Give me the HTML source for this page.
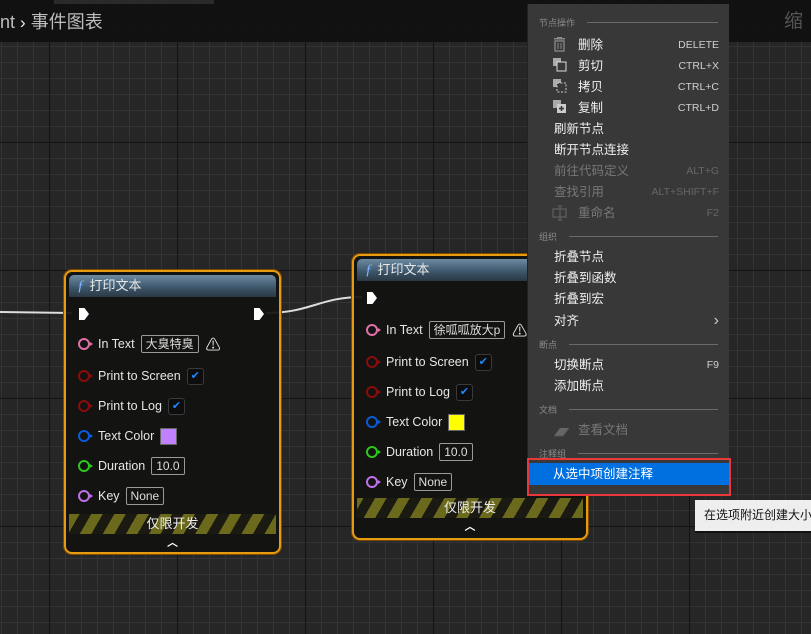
<!DOCTYPE html>
<html><head><meta charset="utf-8"><style>
*{margin:0;padding:0;box-sizing:border-box}
body{width:811px;height:634px;overflow:hidden;position:relative;font-family:"Liberation Sans","Noto Sans CJK SC",sans-serif;
background-color:#262626;
background-image:
linear-gradient(90deg,#131313 1px,transparent 1px),
linear-gradient(0deg,#131313 1px,transparent 1px),
linear-gradient(90deg,#343434 1px,transparent 1px),
linear-gradient(0deg,#343434 1px,transparent 1px);
background-size:128px 128px,128px 128px,16px 16px,16px 16px;
background-position:49px 0,0 15px,1px 0,0 15px;}
.abs{position:absolute}
.top{left:0;top:0;width:811px;height:42px;background:rgba(16,16,16,.93)}
.node{position:absolute;border:2px solid #e89a10;border-radius:8px;background:rgba(18,19,17,.93);box-shadow:0 0 0 1px #7a4a00}
.node .hd{position:absolute;left:3px;right:3px;top:3px;height:22px;border-radius:5px 5px 0 0;background:linear-gradient(180deg,#6c8aa2 0%,#3b5468 60%,#2a3844 100%);color:#e8e8e8;font-size:13px;line-height:22px;padding-left:8px}
.node .hd i{color:#7fb6ff;font-family:"Liberation Serif",serif;font-size:15px;margin-right:5px}
.row{position:absolute;left:12px;height:20px;display:flex;align-items:center;color:#e6e6e6;font-size:12.5px;white-space:nowrap}
.pin{width:12px;height:12px;border-radius:50%;border:2px solid;margin-right:8px;position:relative}
.pin:after{content:"";position:absolute;right:-5px;top:2px;border-left:3px solid;border-left-color:inherit;border-top:2px solid transparent;border-bottom:2px solid transparent}
.box{border:1px solid #9a9a9a;border-radius:2px;padding:0 4px;height:18px;line-height:16px;margin-left:6px;color:#ddd;font-size:12px}
.chk{width:17px;height:17px;border:1px solid #3a3a3a;border-radius:3px;background:#0d0d0d;margin-left:6px;color:#1e88ff;font-size:11px;text-align:center;line-height:15px}
.sw{width:17px;height:17px;margin-left:6px;border:1px solid #666}
.stripe{position:absolute;left:3px;right:3px;height:20px;background:repeating-linear-gradient(-60deg,#6b6a1c 0 10px,#1a1a12 10px 20px);color:#eee;font-size:13px;text-align:center;line-height:20px}
.caret{position:absolute;left:0;right:0;text-align:center;color:#fff;font-size:11px;font-weight:bold}
.exec{position:absolute;width:10px;height:12px;background:#fff;clip-path:polygon(0 0,55% 0,100% 50%,55% 100%,0 100%)}
.menu{left:527px;top:4px;width:202px;height:490px;background:#383838;border-left:1px solid #222}
.mi{position:absolute;left:26px;right:10px;height:20px;line-height:20px;font-size:12.5px;color:#f0f0f0;white-space:nowrap}
.mi b{position:absolute;right:0;top:0;font-weight:normal;font-size:10.5px;color:#cfcfcf}
.mi.d{color:#777}.mi.d b{color:#666}
.mi.ic{padding-left:24px}
.sec{position:absolute;left:11px;right:11px;font-size:9px;color:#8a8a8a;height:12px;display:flex;align-items:center}
.sec:after{content:"";flex:1;height:1px;background:#6a6a6a;margin-left:12px}
</style></head><body>
<div class="abs top"></div>
<div class="abs" style="left:54px;top:0;width:160px;height:4px;background:#2a2a2a"></div>
<div class="abs" style="left:0;top:8px;color:#bdbdbd;font-size:18px;line-height:28px;white-space:nowrap">nt <span style="color:#eee;font-size:17px">&#x203A;</span> 事件图表</div>
<div class="abs" style="left:784px;top:8px;color:#555;font-size:19px;line-height:28px">缩</div>

<svg class="abs" style="left:0;top:0" width="811" height="634">
<path d="M0 312 L72 313" stroke="#ddd" stroke-width="2" fill="none"/>
<path d="M266 313 C310 313,320 297,362 297" stroke="#ddd" stroke-width="2" fill="none"/>
</svg>

<div class="node" style="left:64px;top:270px;width:217px;height:284px">
 <div class="hd"><i>ƒ</i>打印文本</div>
 <div class="exec" style="left:13px;top:36px"></div>
 <div class="exec" style="left:188px;top:36px"></div>
 <div class="row" style="top:62px"><div class="pin" style="border-color:#e070a8"></div>In Text<span class="box">大臭特臭</span><span style="margin-left:7px;font-size:15px">⚠</span></div>
 <div class="row" style="top:94px"><div class="pin" style="border-color:#8a0c0c"></div>Print to Screen<span class="chk">✔</span></div>
 <div class="row" style="top:124px"><div class="pin" style="border-color:#8a0c0c"></div>Print to Log<span class="chk">✔</span></div>
 <div class="row" style="top:154px"><div class="pin" style="border-color:#0c5ad8"></div>Text Color<span class="sw" style="background:#c080ff"></span></div>
 <div class="row" style="top:184px"><div class="pin" style="border-color:#2ec81c"></div>Duration<span class="box">10.0</span></div>
 <div class="row" style="top:214px"><div class="pin" style="border-color:#c070e8"></div>Key<span class="box">None</span></div>
 <div class="stripe" style="top:242px">仅限开发</div>
 <div class="caret" style="top:262px">︿</div>
</div>

<div class="node" style="left:352px;top:254px;width:236px;height:286px">
 <div class="hd"><i>ƒ</i>打印文本</div>
 <div class="exec" style="left:13px;top:36px"></div>
 <div class="row" style="top:64px"><div class="pin" style="border-color:#e070a8"></div>In Text<span class="box">徐呱呱放大p</span><span style="margin-left:7px;font-size:15px">⚠</span></div>
 <div class="row" style="top:96px"><div class="pin" style="border-color:#8a0c0c"></div>Print to Screen<span class="chk">✔</span></div>
 <div class="row" style="top:126px"><div class="pin" style="border-color:#8a0c0c"></div>Print to Log<span class="chk">✔</span></div>
 <div class="row" style="top:156px"><div class="pin" style="border-color:#0c5ad8"></div>Text Color<span class="sw" style="background:#ffff00"></span></div>
 <div class="row" style="top:186px"><div class="pin" style="border-color:#2ec81c"></div>Duration<span class="box">10.0</span></div>
 <div class="row" style="top:216px"><div class="pin" style="border-color:#c070e8"></div>Key<span class="box">None</span></div>
 <div class="stripe" style="top:242px">仅限开发</div>
 <div class="caret" style="top:262px">︿</div>
</div>

<div class="abs menu">
 <div class="sec" style="top:12px">节点操作</div>
 <div class="mi ic" style="top:31px">删除<b>DELETE</b></div>
 <div class="mi ic" style="top:52px">剪切<b>CTRL+X</b></div>
 <div class="mi ic" style="top:73px">拷贝<b>CTRL+C</b></div>
 <div class="mi ic" style="top:94px">复制<b>CTRL+D</b></div>
 <div class="mi" style="top:115px">刷新节点</div>
 <div class="mi" style="top:136px">断开节点连接</div>
 <div class="mi d" style="top:157px">前往代码定义<b>ALT+G</b></div>
 <div class="mi d" style="top:178px">查找引用<b>ALT+SHIFT+F</b></div>
 <div class="mi d ic" style="top:199px">重命名<b>F2</b></div>
 <div class="sec" style="top:226px">组织</div>
 <div class="mi" style="top:243px">折叠节点</div>
 <div class="mi" style="top:264px">折叠到函数</div>
 <div class="mi" style="top:285px">折叠到宏</div>
 <div class="mi" style="top:307px">对齐<b style="font-size:16px;color:#ccc">›</b></div>
 <div class="sec" style="top:334px">断点</div>
 <div class="mi" style="top:351px">切换断点<b>F9</b></div>
 <div class="mi" style="top:372px">添加断点</div>
 <div class="sec" style="top:399px">文档</div>
 <div class="mi d ic" style="top:416px">查看文档</div>
 <div class="sec" style="top:443px">注释组</div>
</div>
<svg class="abs" style="left:552px;top:37px" width="20" height="410">
 <g fill="#8a8a8a"><rect x="2" y="1" width="11" height="1.5"/><rect x="5" y="0" width="5" height="1.5"/><rect x="3" y="4" width="9" height="10" fill="none" stroke="#8a8a8a" stroke-width="1.3"/><rect x="5.5" y="6" width="1" height="6"/><rect x="8.5" y="6" width="1" height="6"/></g>
 <g><rect x="1" y="21" width="8" height="8" fill="#aaa"/><rect x="5" y="25" width="9" height="9" fill="#383838" stroke="#ddd"/></g>
 <g><rect x="1" y="42" width="8" height="8" fill="#aaa"/><rect x="5" y="46" width="9" height="9" fill="#383838" stroke="#ccc" stroke-dasharray="2 1.5"/></g>
 <g><rect x="1" y="63" width="8" height="8" fill="#aaa"/><rect x="5" y="67" width="9" height="9" fill="#ccc"/><path d="M9.5 69v5M7 71.5h5" stroke="#333" stroke-width="1.5"/></g>
 <g stroke="#666" fill="none"><rect x="1" y="172" width="13" height="8"/><path d="M8 169v14M6 169h4M6 183h4"/></g>
 <path d="M2 399 l6-8 h9 l-6 8z" fill="#666"/><path d="M2 399 h9 l6-8" stroke="#555" fill="none"/>
</svg>
<div class="abs" style="left:527px;top:463px;width:203px;height:22px;background:#0070e0"></div>
<div class="abs" style="left:553px;top:463px;color:#fff;font-size:12.5px;line-height:22px">从选中项创建注释</div>
<div class="abs" style="left:527px;top:458px;width:204px;height:38px;border:2px solid #e8383a"></div>

<div class="abs" style="left:695px;top:500px;width:120px;height:33px;background:#eeeeee;border-bottom:2px solid #111;color:#111;font-size:12px;line-height:31px;padding-left:9px;white-space:nowrap;overflow:hidden">在选项附近创建大小</div>
</body></html>
